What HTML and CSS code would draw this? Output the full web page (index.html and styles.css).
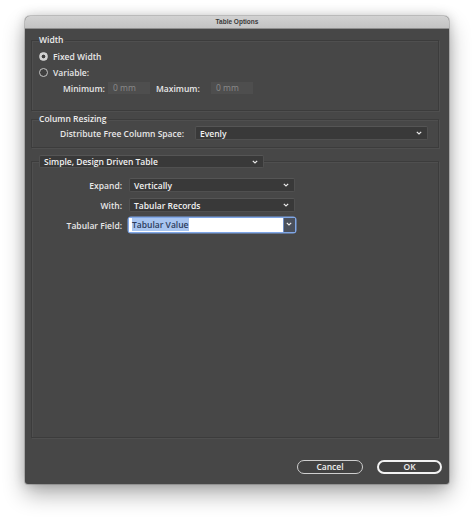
FILE: index.html
```html
<!DOCTYPE html>
<html lang="en">
<head>
<meta charset="utf-8">
<title>Table Options</title>
<link rel="stylesheet" href="styles.css">
</head>
<body>
<div class="dialog">
  <div class="titlebar">Table Options</div>
  <div class="content">
    <section class="group g-width">
      <div class="group-label">Width</div>
      <div class="radio-row"><span class="radio on"></span>Fixed Width</div>
      <div class="radio-row"><span class="radio"></span>Variable:</div>
      <div class="minmax-row">
        <span class="mm-label">Minimum:</span><span class="num-input">0 mm</span>
        <span class="mm-label max">Maximum:</span><span class="num-input">0 mm</span>
      </div>
    </section>

    <section class="group g-resize">
      <div class="group-label">Column Resizing</div>
      <div class="resize-row">
        <span class="row-label">Distribute Free Column Space:</span>
        <div class="select resize-select">Evenly<svg class="chev" viewBox="0 0 6 4"><path d="M0.8 0.8 L3 3 L5.2 0.8"/></svg></div>
      </div>
    </section>

    <section class="group g-table">
      <div class="select type-select">Simple, Design Driven Table<svg class="chev" viewBox="0 0 6 4"><path d="M0.8 0.8 L3 3 L5.2 0.8"/></svg></div>
      <div class="form-grid">
        <span class="row-label">Expand:</span>
        <div class="select">Vertically<svg class="chev" viewBox="0 0 6 4"><path d="M0.8 0.8 L3 3 L5.2 0.8"/></svg></div>
        <span class="row-label">With:</span>
        <div class="select">Tabular Records<svg class="chev" viewBox="0 0 6 4"><path d="M0.8 0.8 L3 3 L5.2 0.8"/></svg></div>
        <span class="row-label">Tabular Field:</span>
        <div class="combo">
          <span class="combo-field"><span class="sel-text">Tabular Value</span></span>
          <span class="combo-btn"><svg class="chev" viewBox="0 0 6 4"><path d="M0.8 0.8 L3 3 L5.2 0.8"/></svg></span>
        </div>
      </div>
    </section>

    <div class="footer">
      <button class="btn">Cancel</button>
      <button class="btn primary">OK</button>
    </div>
  </div>
</div>
</body>
</html>
```

FILE: styles.css
```css
* { box-sizing: border-box; }

html, body {
  margin: 0;
  background: #ffffff;
}

body {
  padding: 16px 25px 0 25px;
  min-height: 517px;
  font-family: "Open Sans", "Liberation Sans", sans-serif;
  font-weight: 600;
  font-size: 8.5px;
  color: #e8e8e8;
}

.dialog {
  width: 424px;
  height: 468px;
  background: #474747;
  border-radius: 5px 5px 3px 3px;
  box-shadow: 0 0 0 1px rgba(0,0,0,0.16), 0 10px 22px rgba(0,0,0,0.32), 0 0 12px rgba(0,0,0,0.18);
  display: flex;
  flex-direction: column;
  overflow: hidden;
}

.titlebar {
  height: 13px;
  flex: none;
  background: linear-gradient(#d2d2d2, #c3c3c3);
  border-bottom: 1px solid #8e8e8e;
  color: #3a3a3a;
  font-family: "Liberation Sans", sans-serif;
  font-weight: 700;
  font-size: 6.5px;
  line-height: 12px;
  text-align: center;
}

.content {
  flex: 1;
  display: flex;
  flex-direction: column;
  padding: 0 10px 0 6px;
}

/* grouped panels with an etched outline */
.group {
  border: 1px solid #3c3c3c;
  box-shadow: inset 1px 1px 0 #4f4f4f, 1px 1px 0 #4f4f4f;
  padding: 0 7px;
}

.group-label {
  display: block;
  width: fit-content;
  height: 10px;
  line-height: 10px;
  margin-top: -6px;
  color: #ededed;
  background: #474747;
  padding-right: 2px;
}

.g-width {
  margin-top: 11px;
  height: 71px;
}

.radio-row {
  display: flex;
  align-items: center;
  height: 16px;
  gap: 5px;
}
.g-width .group-label + .radio-row { margin-top: 3px; }

.radio {
  width: 9px;
  height: 9px;
  border-radius: 50%;
  border: 1px solid #c4c4c4;
  background: #3f3f3f;
  flex: none;
}
.radio.on {
  border-color: #d4d4d4;
  background: radial-gradient(circle, #3e3e3e 0 1.6px, #d0d0d0 2.2px);
}

.minmax-row {
  display: flex;
  align-items: center;
  height: 16px;
  padding-left: 24px;
}
.mm-label { width: 45px; }
.mm-label.max { width: 55px; margin-left: 6px; }

.num-input {
  width: 42px;
  height: 12px;
  line-height: 12px;
  background: #4e4e4e;
  color: #8b8b8b;
  font-weight: 400;
  padding-left: 5px;
}

.g-resize {
  margin-top: 8px;
  height: 29px;
}

.resize-row {
  display: flex;
  align-items: center;
  margin-top: 2px;
  padding-left: 18px;
}
.resize-row .row-label {
  width: 127px;
  text-align: right;
  margin-right: 11px;
}
.resize-select { width: 233px; }

/* popup menus */
.select {
  position: relative;
  height: 14px;
  line-height: 13px;
  background: #393939;
  border: 1px solid #505050;
  border-top-color: #555555;
  border-radius: 2px;
  color: #f2f2f2;
  padding-left: 4px;
}
.chev {
  position: absolute;
  right: 5px;
  top: 4px;
  width: 6px;
  height: 4px;
  fill: none;
  stroke: #e8e8e8;
  stroke-width: 1.2;
}

.g-table {
  margin-top: 13px;
  flex: 1;
  padding-left: 7px;
}

.type-select {
  width: 225px;
  height: 13px;
  line-height: 12px;
  margin-top: -7px;
}
.type-select .chev { top: 3.5px; }

.form-grid {
  display: grid;
  grid-template-columns: 83px 166px;
  column-gap: 7px;
  row-gap: 6px;
  margin-top: 10px;
  align-items: center;
}
.form-grid .row-label { text-align: right; }

.combo {
  display: flex;
  height: 14px;
  border-radius: 2px;
  box-shadow: 0 0 0 1.5px #7fa6e6;
}
.combo-field {
  flex: 1;
  background: #ffffff;
  padding-left: 3px;
  line-height: 14px;
}
.sel-text {
  background: #a8c5f0;
  color: #2b3b5c;
  padding: 1px 0;
}
.combo-btn {
  position: relative;
  width: 12px;
  background: #4a505c;
  border-left: 1px solid #6d8cc2;
}
.combo-btn .chev { right: 3px; }

.footer {
  flex: none;
  display: flex;
  justify-content: flex-end;
  gap: 14px;
  height: 46px;
  padding-top: 22px;
  margin-right: -3px;
}

.btn {
  width: 66px;
  height: 14px;
  padding: 0;
  border: 1.5px solid #cfcfcf;
  border-radius: 7px;
  background: #424242;
  color: #f0f0f0;
  font-family: "Open Sans", "Liberation Sans", sans-serif;
  font-weight: 600;
  font-size: 8.5px;
  line-height: 10px;
}
.btn.primary {
  width: 65px;
  border: 2px solid #f2f2f2;
}
```
